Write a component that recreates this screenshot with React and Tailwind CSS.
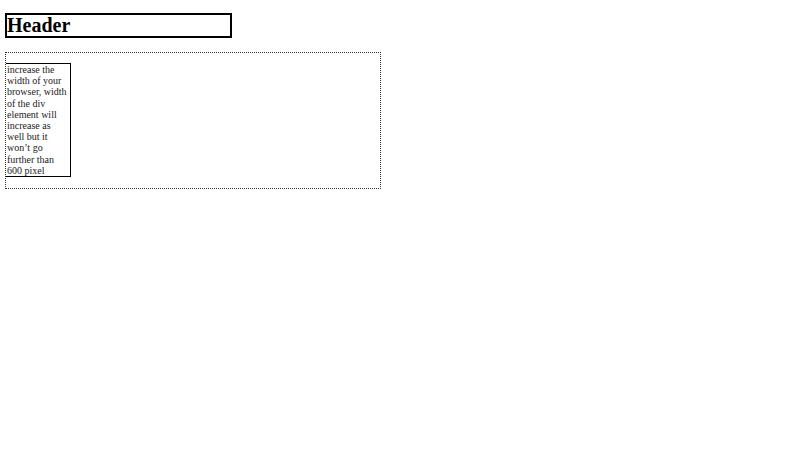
export default function App() {
  return (
    <div className="min-h-screen bg-white px-[5px] pt-[13px] text-black" style={{ fontFamily: '"Liberation Serif", "Times New Roman", serif' }}>
      <h1 className="w-[227px] border-2 border-black text-[20px] font-bold leading-[21px]">Header</h1>
      <div className="mt-[14px] w-[376px] border border-dotted border-[#333] pt-[10px] pb-[11px]">
        <div className="w-[65px] border border-l-0 border-black pl-px text-[10px] leading-[11.2px] text-[#222]">
          increase the width of your browser, width of the div element will increase as well but it won’t go further than 600 pixel
        </div>
      </div>
    </div>
  );
}
